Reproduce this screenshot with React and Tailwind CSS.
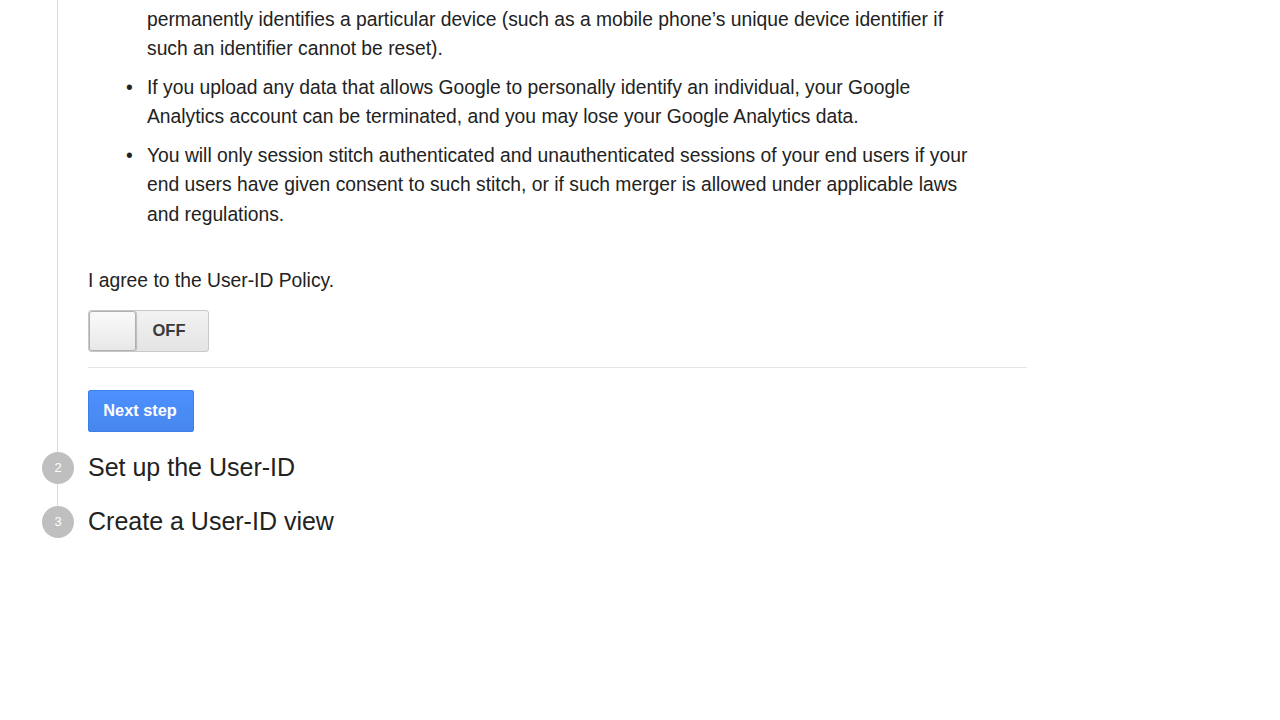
export default function App() {
  const font = { fontFamily: '"Liberation Sans", Arial, sans-serif' };
  const Bullet = ({ children, className = "" }) => (
    <li className={"flex " + className}>
      <span className="w-[59px] shrink-0 pl-[38px]">•</span>
      <div className="flex flex-col">{children}</div>
    </li>
  );
  return (
    <div className="relative h-[720px] w-[1280px] overflow-hidden bg-white text-[#222]" style={font}>
      <div className="ml-[57px] border-l border-[#dcdcdc] pl-[30px] pb-[20px]">
        <ul className="-mt-[25px] flex flex-col gap-[9px] text-[19.3px] leading-[29.5px]">
          <Bullet className="[&>span]:invisible">
            <span className="whitespace-nowrap">You will not upload any data that allows Google to personally identify an individual (such as names, or data that</span>
            <span className="whitespace-nowrap">permanently identifies a particular device (such as a mobile phone’s unique device identifier if</span>
            <span className="whitespace-nowrap">such an identifier cannot be reset).</span>
          </Bullet>
          <Bullet>
            <span className="whitespace-nowrap">If you upload any data that allows Google to personally identify an individual, your Google</span>
            <span className="whitespace-nowrap">Analytics account can be terminated, and you may lose your Google Analytics data.</span>
          </Bullet>
          <Bullet>
            <span className="whitespace-nowrap">You will only session stitch authenticated and unauthenticated sessions of your end users if your</span>
            <span className="whitespace-nowrap">end users have given consent to such stitch, or if such merger is allowed under applicable laws</span>
            <span className="whitespace-nowrap">and regulations.</span>
          </Bullet>
        </ul>
        <p className="mt-[37px] text-[19.3px] leading-[29.5px]">I agree to the User-ID Policy.</p>
        <div className="mt-[14px] flex h-[42px] w-[121px] overflow-hidden rounded-[3px] border border-[#c8c8c8] bg-gradient-to-b from-[#f2f2f2] to-[#e4e4e4]">
          <div className="h-full w-[47px] rounded-[3px] border border-[#b0b0b0] bg-gradient-to-b from-[#fafafa] to-[#e8e8e8] shadow-[1px_0_1px_rgba(0,0,0,0.2)]"></div>
          <div className="flex flex-1 items-center justify-center pr-[6px] text-[16.5px] font-bold text-[#3a3a3a]">OFF</div>
        </div>
        <div className="mt-[15px] h-px w-[939px] bg-[#e5e5e5]"></div>
        <button className="mt-[22px] flex h-[42px] w-[106px] items-center justify-center pr-[2px] rounded-[2px] border border-[#3b7fe8] bg-gradient-to-b from-[#4d90fe] to-[#4787ed] text-[16.3px] font-bold text-white">
          Next step
        </button>
      </div>
      <div className="flex flex-col">
        <div className="flex h-[32px] items-center">
          <div className="ml-[42px] flex h-[32px] w-[32px] items-center justify-center rounded-full bg-[#bfbfbf] text-[13px] text-white">2</div>
          <span className="ml-[14px] text-[25px] text-[#222]">Set up the User-ID</span>
        </div>
        <div className="ml-[57px] h-[22px] w-px bg-[#dcdcdc]"></div>
        <div className="flex h-[32px] items-center">
          <div className="ml-[42px] flex h-[32px] w-[32px] items-center justify-center rounded-full bg-[#bfbfbf] text-[13px] text-white">3</div>
          <span className="ml-[14px] text-[25px] text-[#222]">Create a User-ID view</span>
        </div>
      </div>
    </div>
  );
}
